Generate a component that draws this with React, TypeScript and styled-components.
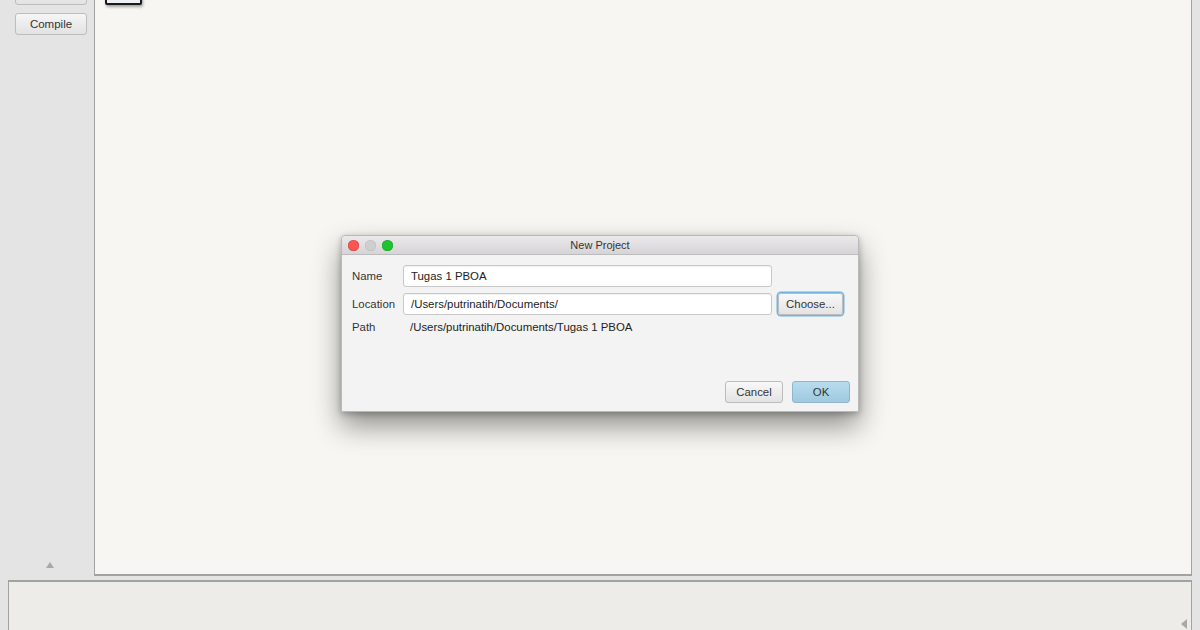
import React from "react";
import styled, { createGlobalStyle } from "styled-components";

const GlobalStyle = createGlobalStyle`
  html, body {
    margin: 0;
    padding: 0;
    background: #e4e4e4;
    font-family: "Liberation Sans", Arial, sans-serif;
  }
`;

const Screen = styled.div`
  position: relative;
  width: 1200px;
  height: 630px;
  overflow: hidden;
  background: #e4e4e4;
  display: flex;
  flex-direction: column;
`;

const Workspace = styled.div`
  display: flex;
  height: 576px;
  flex-shrink: 0;
`;

const SidePanel = styled.div`
  width: 94px;
  flex-shrink: 0;
  display: flex;
  flex-direction: column;
  align-items: flex-start;
  padding-left: 15px;
  box-sizing: border-box;
`;

const ButtonStack = styled.div`
  display: flex;
  flex-direction: column;
  gap: 8px;
  margin-top: -17px;
`;

const SideButton = styled.button`
  width: 72px;
  height: 22px;
  border: 1px solid #bdbdbd;
  border-radius: 3px;
  background: linear-gradient(#f6f6f6, #e2e2e2);
  font-family: "Liberation Sans", Arial, sans-serif;
  font-size: 11.5px;
  color: #333;
  padding: 0;
`;

const Expander = styled.div`
  margin-top: auto;
  margin-bottom: 8px;
  margin-left: 31px;
  width: 0;
  height: 0;
  border-left: 4px solid transparent;
  border-right: 4px solid transparent;
  border-bottom: 6px solid #a8a8a8;
`;

const Canvas = styled.div`
  position: relative;
  flex: 1;
  margin-right: 8px;
  background: #f7f6f2;
  border: 1px solid #a2a2a2;
  border-top: none;
  border-bottom: 2px solid #a2a2a2;
  overflow: hidden;
`;

const ClassBox = styled.div`
  position: absolute;
  left: 10px;
  top: -20px;
  width: 33px;
  height: 21px;
  background: #eef1f4;
  border: 2px solid #1a1a1a;
  border-radius: 2px;
  box-shadow: 1px 2px 3px rgba(0, 0, 0, 0.35);
`;

const Terminal = styled.div`
  position: relative;
  flex: 1;
  margin: 4px 8px 0 8px;
  background: #edece8;
  border: 1px solid #a2a2a2;
  border-top: 2px solid #a2a2a2;
  border-bottom: none;
`;

const Collapse = styled.div`
  position: absolute;
  right: 4px;
  bottom: 1px;
  width: 0;
  height: 0;
  border-top: 5px solid transparent;
  border-bottom: 5px solid transparent;
  border-right: 6px solid #a8a8a8;
`;

const Dialog = styled.div`
  position: absolute;
  left: 341px;
  top: 235px;
  width: 518px;
  height: 177px;
  background: #f3f3f3;
  border: 1px solid #b9b9b9;
  border-radius: 4px 4px 0 0;
  box-shadow: 0 14px 28px rgba(0, 0, 0, 0.42), 0 2px 6px rgba(0, 0, 0, 0.25);
  display: flex;
  flex-direction: column;
  box-sizing: border-box;
`;

const TitleBar = styled.div`
  position: relative;
  height: 18px;
  flex-shrink: 0;
  background: linear-gradient(#ebe9eb, #d6d4d6);
  border-bottom: 1px solid #bcbcbc;
  border-radius: 4px 4px 0 0;
  display: flex;
  align-items: center;
  justify-content: center;
`;

const Lights = styled.div`
  position: absolute;
  left: 6px;
  top: 4px;
  display: flex;
  gap: 6px;
`;

const Light = styled.span<{ $color: string; $edge: string }>`
  width: 11px;
  height: 11px;
  border-radius: 50%;
  background: ${(p) => p.$color};
  box-shadow: inset 0 0 0 0.5px ${(p) => p.$edge};
`;

const Title = styled.span`
  font-size: 11px;
  color: #333;
`;

const Body = styled.div`
  flex: 1;
  padding: 10px 15px 8px 10px;
  display: flex;
  flex-direction: column;
`;

const Form = styled.div`
  display: grid;
  grid-template-columns: 45px 369px auto;
  column-gap: 6px;
  row-gap: 6px;
  align-items: center;
`;

const Label = styled.span`
  font-size: 11.4px;
  color: #333;
`;

const Field = styled.div`
  height: 22px;
  box-sizing: border-box;
  border: 1px solid #c8c8c8;
  border-radius: 3px;
  background: #fff;
  box-shadow: inset 0 1px 1px rgba(0, 0, 0, 0.06);
  padding: 0 7px;
  display: flex;
  align-items: center;
  font-size: 11.4px;
  color: #222;
`;

const PlainValue = styled.span`
  font-size: 11.4px;
  color: #222;
  padding-left: 7px;
  white-space: nowrap;
`;

const Button = styled.button<{ $primary?: boolean; $focus?: boolean }>`
  height: 22px;
  box-sizing: border-box;
  border: 1px solid ${(p) => (p.$primary ? "#8fb6cc" : "#bcbcbc")};
  border-radius: 3px;
  background: ${(p) =>
    p.$primary
      ? "linear-gradient(#b8dcef, #9fc9df)"
      : "linear-gradient(#f8f8f8, #e3e3e3)"};
  box-shadow: ${(p) => (p.$focus ? "0 0 0 1.5px #6fb5e2" : "none")};
  font-family: "Liberation Sans", Arial, sans-serif;
  font-size: 11.4px;
  color: #333;
  padding: 0;
`;

const Footer = styled.div`
  margin-top: auto;
  display: flex;
  justify-content: flex-end;
  gap: 9px;
  margin-right: -7px;
`;

export default function App() {
  return (
    <>
      <GlobalStyle />
      <Screen>
        <Workspace>
          <SidePanel>
            <ButtonStack>
              <SideButton>New Class</SideButton>
              <SideButton>Compile</SideButton>
            </ButtonStack>
            <Expander />
          </SidePanel>
          <Canvas>
            <ClassBox />
          </Canvas>
        </Workspace>
        <Terminal>
          <Collapse />
        </Terminal>
        <Dialog>
          <TitleBar>
            <Lights>
              <Light $color="#fc5753" $edge="#df3d38" />
              <Light $color="#cfcfcf" $edge="#bdbdbd" />
              <Light $color="#1fc230" $edge="#16a823" />
            </Lights>
            <Title>New Project</Title>
          </TitleBar>
          <Body>
            <Form>
              <Label>Name</Label>
              <Field>Tugas 1 PBOA</Field>
              <span />
              <Label>Location</Label>
              <Field>/Users/putrinatih/Documents/</Field>
              <Button $focus style={{ width: 65 }}>
                Choose...
              </Button>
              <Label>Path</Label>
              <PlainValue>/Users/putrinatih/Documents/Tugas 1 PBOA</PlainValue>
              <span />
            </Form>
            <Footer>
              <Button style={{ width: 58 }}>Cancel</Button>
              <Button $primary style={{ width: 58 }}>
                OK
              </Button>
            </Footer>
          </Body>
        </Dialog>
      </Screen>
    </>
  );
}
